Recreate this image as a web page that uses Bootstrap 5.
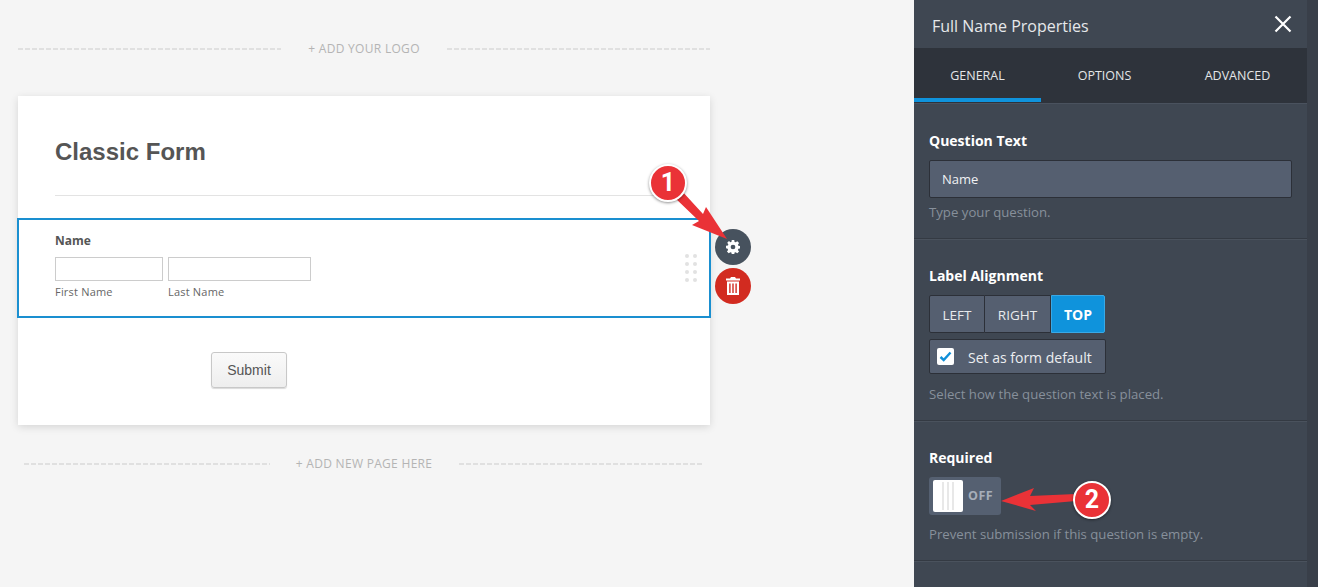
<!DOCTYPE html>
<html lang="en">

<head>
	<meta charset="UTF-8">
	<meta name="viewport" content="width=device-width, initial-scale=1.0">
	<title>Full Name Properties</title>
	<link href="https://cdn.jsdelivr.net/npm/bootstrap@5.3.0/dist/css/bootstrap.min.css" rel="stylesheet">
	<style>
		html, body { height: 587px; overflow: hidden; }
		body { background: #f5f5f5; font-family: "Open Sans", sans-serif; position: relative; }

		/* left: form canvas */
		.canvas-area { width: 914px; flex: none; padding: 0 0 0 18px; }
		.add-row { width: 692px; color: #b4b4b4; font-size: 12px; line-height: 16px; white-space: nowrap; letter-spacing: .3px; }
		.add-logo { margin-top: 40px; height: 16px; }
		.add-page { margin-top: 30px; height: 16px; padding: 0 6px; }
		.dash-line { flex: 1; height: 2px; margin-top: 2px; background: repeating-linear-gradient(90deg, #e0e0e0 0 5px, transparent 5px 7px); }
		.add-label { padding-top: 2px; }
		.add-logo .add-label { width: 166px; text-align: center; }
		.add-page .add-label { width: 189px; text-align: center; }

		.form-sheet { width: 692px; height: 329px; margin-top: 40px; background: #fff; box-shadow: 0 2px 8px rgba(0, 0, 0, .13); padding-top: 40px; }
		.sheet-title { font-family: "Liberation Sans", sans-serif; font-size: 24px; font-weight: 700; line-height: 32px; color: #555; margin: 0 0 0 37px; }
		.sheet-rule { margin: 27px 35px 0 37px; height: 1px; background: #e3e3e3; }
		.field-box { position: relative; margin: 22px -1px 0 -1px; height: 100px; border: 2px solid #1a8fd0; padding: 13px 0 0 36px; }
		.field-label { font-size: 12px; font-weight: 700; line-height: 16px; color: #555; }
		.name-inputs { margin-top: 8px; gap: 5px; }
		.name-first { width: 108px; }
		.name-last { width: 143px; }
		.name-inputs .form-control { height: 24px; border: 1px solid #ccc; border-radius: 0; padding: 0 4px; }
		.sub-label { font-size: 11px; line-height: 14px; color: #666; margin-top: 4px; letter-spacing: .2px; }
		.drag-dots { position: absolute; right: 12px; top: 34px; width: 12px; display: grid; grid-template-columns: 4px 4px; gap: 4px; }
		.drag-dots i { width: 4px; height: 4px; border-radius: 50%; background: #e2e2e2; display: block; }
		.submit-btn { display: block; margin: 34px 0 0 193px; width: 76px; height: 36px; padding: 0; font-family: "Liberation Sans", sans-serif; font-size: 14px; color: #555; border: 1px solid #c8c8c8; border-radius: 3px; background: linear-gradient(#fafafa, #eee); box-shadow: 0 1px 1px rgba(0, 0, 0, .15); }
		.tool-btn { position: absolute; left: 715px; width: 36px; height: 36px; border-radius: 50%; }
		.tool-gear { top: 229px; background: #47525e; }
		.tool-trash { top: 268px; background: #d22b20; }

		/* right: properties panel */
		.props-panel { width: 404px; flex: none; height: 587px; background: #3f4752; color: #fff; padding-right: 11px; position: relative; }
		.props-strip { position: absolute; right: 0; top: 0; bottom: 0; width: 11px; background: #393f49; }
		.props-head { height: 48px; padding: 3px 15px 0 18px; font-size: 16px; color: #e6e8ea; }
		.props-head svg { margin-top: -3px; }
		.props-tabs { height: 56px; background: #2e333b; border-bottom: 1px solid #4a525e; font-size: 12.5px; color: #e4e6e8; }
		.props-tab { width: 127px; height: 54px; line-height: 56px; text-align: center; font-weight: 500; }
		.props-tab.is-on { border-bottom: 4px solid #0f93dc; }
		.props-tab:last-child { width: 139px; }
		.prop-block { padding: 0 15px; border-bottom: 1px solid #343a43; box-shadow: 0 1px 0 #4a525d; }
		.block-text { height: 135px; padding-top: 27px; }
		.block-align { height: 182px; padding-top: 27px; }
		.block-req { height: 140px; padding-top: 27px; }
		.prop-title { font-size: 14px; font-weight: 700; line-height: 19px; margin: 0; }
		.prop-hint { font-size: 13.2px; line-height: 17px; color: #87909b; }
		.prop-input { width: 363px; height: 38px; margin-top: 10px; background: #555f70; border: 1px solid #2c3038; border-radius: 2px; padding: 0 12px; font-size: 13px; font-weight: 500; line-height: 36px; color: #f0f1f3; }
		.block-text .prop-hint { margin-top: 6px; }
		.align-group { margin-top: 10px; height: 38px; width: 176px; }
		.align-opt { height: 38px; background: #555f70; border: 1px solid #2c3038; border-left: 0; font-size: 13.5px; line-height: 38px; text-align: center; color: #e8eaec; }
		.align-opt:first-child { border-left: 1px solid #2c3038; width: 56px; border-radius: 2px 0 0 2px; }
		.align-opt:nth-child(2) { width: 66px; }
		.align-opt.is-on { width: 54px; background: #0f93dc; border: 1px solid #39a9e6; border-radius: 0 2px 2px 0; font-size: 14px; font-weight: 700; color: #fff; }
		.default-check { width: 177px; height: 35px; margin-top: 6px; background: #555f70; border: 1px solid #2c3038; border-radius: 2px; padding-left: 7px; font-size: 14px; color: #eceef0; gap: 14px; }
		.default-check .check-label { padding-top: 2px; }
		.check-box { width: 17px; height: 17px; background: #fff; border-radius: 2px; flex: none; }
		.block-align .prop-hint { margin-top: 12px; }
		.toggle-off { width: 72px; height: 38px; margin-top: 10px; background: #556071; border-radius: 3px; padding: 3px 0 0 4px; }
		.toggle-knob { width: 30px; height: 32px; background: #fff; border-radius: 2px; gap: 3px; }
		.toggle-knob i { width: 2px; height: 28px; background: #e8e8e8; display: block; }
		.toggle-text { font-size: 12.5px; font-weight: 700; color: #a6aeb9; margin-left: 5px; line-height: 32px; letter-spacing: .5px; }
		.block-req .prop-hint { margin-top: 11px; }

		.note-layer { position: absolute; left: 0; top: 0; pointer-events: none; }
		.note-num { position: absolute; width: 38px; height: 38px; border-radius: 50%; background: #ea3237; border: 2px solid #fff; box-shadow: 0 1px 3px rgba(0, 0, 0, .45); color: #fff; font-family: Roboto, sans-serif; font-size: 25px; font-weight: 700; line-height: 34px; text-align: center; }
		.note-one { left: 649px; top: 164px; }
		.note-two { left: 1073px; top: 481px; }
	</style>
</head>

<body class="d-flex">

	<!-- Form canvas -->
	<div class="canvas-area">
		<div class="add-row add-logo d-flex align-items-center">
			<div class="dash-line"></div>
			<div class="add-label">+ ADD YOUR LOGO</div>
			<div class="dash-line"></div>
		</div>

		<div class="form-sheet">
			<h1 class="sheet-title">Classic Form</h1>
			<div class="sheet-rule"></div>
			<div class="field-box">
				<div class="field-label">Name</div>
				<div class="name-inputs d-flex">
					<div class="name-first">
						<input class="form-control" type="text" aria-label="First Name">
						<div class="sub-label">First Name</div>
					</div>
					<div class="name-last">
						<input class="form-control" type="text" aria-label="Last Name">
						<div class="sub-label">Last Name</div>
					</div>
				</div>
				<div class="drag-dots"><i></i><i></i><i></i><i></i><i></i><i></i><i></i><i></i></div>
			</div>
			<button type="button" class="btn submit-btn">Submit</button>
		</div>

		<div class="add-row add-page d-flex align-items-center">
			<div class="dash-line"></div>
			<div class="add-label">+ ADD NEW PAGE HERE</div>
			<div class="dash-line"></div>
		</div>
	</div>

	<!-- Field tools -->
	<div class="tool-btn tool-gear d-flex align-items-center justify-content-center">
		<svg width="14" height="14" viewBox="0 0 16 16"><path fill="#fff" fill-rule="evenodd" d="M6.6 0h2.8l.4 2.2 1.2.5L12.9 1.4l2 2-1.3 1.9.5 1.2 2.2.4v2.8l-2.2.4-.5 1.2 1.3 1.9-2 2-1.9-1.3-1.2.5-.4 2.2H6.6l-.4-2.2-1.2-.5-1.9 1.3-2-2 1.3-1.9-.5-1.2L0 9.4V6.6l2.2-.4.5-1.2L1.4 3.1l2-2L5 2.7l1.2-.5zM8 5.3a2.7 2.7 0 1 0 0 5.4 2.7 2.7 0 0 0 0-5.4z"/></svg>
	</div>
	<div class="tool-btn tool-trash d-flex align-items-center justify-content-center">
		<svg width="14" height="18" viewBox="0 0 14 18"><path fill="#fff" fill-rule="evenodd" d="M5 0h4l1 1.5h4V3.5H0V1.5h4zM1 4.500h12V18H1zM3.200 6.500v9.500h1.400V6.500zM6.300 6.500v9.500h1.400V6.500zM9.400 6.500v9.500h1.400V6.500z"/></svg>
	</div>

	<!-- Properties panel -->
	<div class="props-panel">
		<div class="props-strip"></div>
		<div class="props-head d-flex align-items-center justify-content-between">
			<span>Full Name Properties</span>
			<svg width="18" height="18" viewBox="0 0 18 18"><path d="M1.500 1.500l15 15M16.500 1.500l-15 15" stroke="#fff" stroke-width="2.200" fill="none"/></svg>
		</div>
		<div class="props-tabs d-flex">
			<div class="props-tab is-on">GENERAL</div>
			<div class="props-tab">OPTIONS</div>
			<div class="props-tab">ADVANCED</div>
		</div>

		<div class="prop-block block-text">
			<h2 class="prop-title">Question Text</h2>
			<div class="prop-input">Name</div>
			<div class="prop-hint">Type your question.</div>
		</div>

		<div class="prop-block block-align">
			<h2 class="prop-title">Label Alignment</h2>
			<div class="align-group d-flex">
				<div class="align-opt">LEFT</div>
				<div class="align-opt">RIGHT</div>
				<div class="align-opt is-on">TOP</div>
			</div>
			<div class="default-check d-flex align-items-center">
				<span class="check-box d-flex align-items-center justify-content-center">
					<svg width="13" height="11" viewBox="0 0 13 11"><path d="M1.500 6l3.200 3L11.500 1.500" stroke="#0f8fd8" stroke-width="2.400" fill="none"/></svg>
				</span>
				<span class="check-label">Set as form default</span>
			</div>
			<div class="prop-hint">Select how the question text is placed.</div>
		</div>

		<div class="prop-block block-req">
			<h2 class="prop-title">Required</h2>
			<div class="toggle-off d-flex">
				<div class="toggle-knob d-flex justify-content-center align-items-center"><i></i><i></i><i></i></div>
				<div class="toggle-text">OFF</div>
			</div>
			<div class="prop-hint">Prevent submission if this question is empty.</div>
		</div>
	</div>

	<!-- Annotations -->
	<svg class="note-layer" width="1318" height="587" viewBox="0 0 1318 587">
		<path fill="#ea3237" d="M674 197L681 190 703 214 706 207 727 239 692 225 699 221z"/>
		<path fill="#ea3237" d="M1001 501L1034 488 1030 496 1076 494 1076 501 1030 505 1036 511z"/>
	</svg>
	<div class="note-num note-one">1</div>
	<div class="note-num note-two">2</div>

	<script src="https://cdn.jsdelivr.net/npm/bootstrap@5.3.0/dist/js/bootstrap.bundle.min.js"></script>
</body>

</html>
